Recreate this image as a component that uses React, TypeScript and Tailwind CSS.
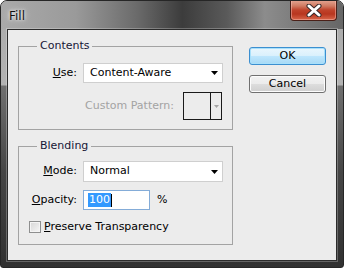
import { ReactNode } from 'react'

function Dropdown({ value, height }: { value: string; height: string }) {
  return (
    <div
      className={`flex w-[140px] ${height} items-center justify-between border border-[#cfcfcf] bg-white pl-[6px] pr-[4px] text-black`}
    >
      <span>{value}</span>
      <svg width="7" height="4" viewBox="0 0 7 4" aria-hidden="true">
        <polygon points="0,0 7,0 3.5,4" fill="#000" />
      </svg>
    </div>
  )
}

function GroupBox({ title, children }: { title: string; children: ReactNode }) {
  return (
    <fieldset className="w-[215px] border border-[#a3a3a3]">
      <legend className="ml-[18px] px-[3px] leading-[14px] text-[#161636]">{title}</legend>
      {children}
    </fieldset>
  )
}

function PushButton({ label, isDefault }: { label: string; isDefault?: boolean }) {
  return (
    <button
      type="button"
      className={`h-[18px] w-[77px] rounded-[3px] border leading-[16px] text-black ${
        isDefault
          ? 'border-[#3c8fd0] bg-[linear-gradient(to_bottom,#eaf6fd_0%,#d9f0fc_50%,#bee6fd_51%,#a7d9f5_100%)] shadow-[inset_0_0_0_1px_#a8e0fb]'
          : 'border-[#707070] bg-[linear-gradient(to_bottom,#f2f2f2_0%,#ebebeb_50%,#dddddd_51%,#cfcfcf_100%)] shadow-[inset_0_0_0_1px_#fcfcfc]'
      }`}
    >
      {label}
    </button>
  )
}

export default function App() {
  return (
    <div className="flex h-[268px] w-[344px] flex-col overflow-hidden rounded-t-[7px] rounded-b-[3px] border border-[#262626] bg-[linear-gradient(to_bottom,#a9a9a9_0px,#b3b3b3_84px,#707070_85px,#464646_170px,#303030_268px)] font-['DejaVu_Sans',sans-serif] text-[11px]">
      {/* title bar */}
      <div className="-mx-[1px] -mt-[1px] flex h-[29px] items-start justify-between bg-[linear-gradient(to_right,#aaaaaa_0%,#9a9a9a_22%,#6a6a6a_40%,#3c3c3c_53%,#5a5a5a_66%,#8c8c8c_77%,#7c7c7c_86%,#666666_100%)] pl-[9px] pr-[7px]">
        <span className="mt-[7px] text-[12px] text-[#111] [text-shadow:0_0_6px_#fff,0_0_3px_#fff]">Fill</span>
        <button
          type="button"
          aria-label="Close"
          className="flex h-[21px] w-[47px] items-center justify-center rounded-b-[4px] border border-t-0 border-[#4a2018] bg-[linear-gradient(to_bottom,#e6a795_0%,#d07a62_30%,#c0432b_50%,#b8361f_70%,#d9664a_100%)] shadow-[inset_0_0_0_1px_rgba(255,200,190,0.45)]"
        >
          <svg width="16" height="13" viewBox="0 0 16 13" aria-hidden="true">
            <path d="M3 2 L13 11 M13 2 L3 11" stroke="#3a2a2a" strokeWidth="5" strokeLinecap="round" />
            <path d="M3 2 L13 11 M13 2 L3 11" stroke="#ffffff" strokeWidth="3" strokeLinecap="round" />
          </svg>
        </button>
      </div>

      {/* client area */}
      <div className="mx-[6px] mb-[6px] flex flex-1 items-start border border-[#2b2b2b] bg-[#ececec] pl-[10px] pt-[9px] shadow-[0_0_0_1px_rgba(255,255,255,0.25)]">
        <div className="flex flex-col gap-[9px]">
          <GroupBox title="Contents">
            <div className="flex flex-col pb-[9px] pt-[10px]">
              <div className="flex items-center">
                <span className="w-[58px] text-right">
                  <span className="underline">U</span>se:
                </span>
                <div className="ml-[6px]">
                  <Dropdown value="Content-Aware" height="h-[20px]" />
                </div>
              </div>
              <div className="mt-[9px] flex items-center justify-end pr-[10px]">
                <span className="text-[#a3a3a3]">Custom Pattern:</span>
                <div className="ml-[9px] flex h-[28px] w-[39px] border border-[#1a1a1a] bg-[#ececec]">
                  <div className="flex-1" />
                  <div className="flex w-[11px] items-center justify-center border-l border-[#1a1a1a]">
                    <svg width="5" height="3" viewBox="0 0 5 3" aria-hidden="true">
                      <polygon points="0,0 5,0 2.5,3" fill="#a5a5a5" />
                    </svg>
                  </div>
                </div>
              </div>
            </div>
          </GroupBox>

          <GroupBox title="Blending">
            <div className="flex flex-col pb-[8px] pt-[8px]">
              <div className="flex items-center">
                <span className="w-[58px] text-right">
                  <span className="underline">M</span>ode:
                </span>
                <div className="ml-[6px]">
                  <Dropdown value="Normal" height="h-[21px]" />
                </div>
              </div>
              <div className="mt-[8px] flex items-center">
                <span className="w-[58px] text-right">
                  <span className="underline">O</span>pacity:
                </span>
                <div className="ml-[6px] flex h-[20px] w-[67px] items-center border border-[#84acd8] bg-white pl-[4px]">
                  <span className="bg-[#3399ff] px-[1px] leading-[14px] text-white">100</span>
                  <span className="h-[13px] w-px bg-black" />
                </div>
                <span className="ml-[7px]">%</span>
              </div>
              <div className="mt-[9px] flex items-center pl-[10px]">
                <span className="h-[12px] w-[12px] border border-[#8e8f8f] bg-[linear-gradient(135deg,#d6d6d6_0%,#f6f6f6_100%)] shadow-[inset_0_0_0_1px_#f4f4f4]" />
                <span className="ml-[3px]">
                  <span className="underline">P</span>reserve Transparency
                </span>
              </div>
            </div>
          </GroupBox>
        </div>

        <div className="ml-[16px] mt-[8px] flex flex-col gap-[10px]">
          <PushButton label="OK" isDefault />
          <PushButton label="Cancel" />
        </div>
      </div>
    </div>
  )
}
